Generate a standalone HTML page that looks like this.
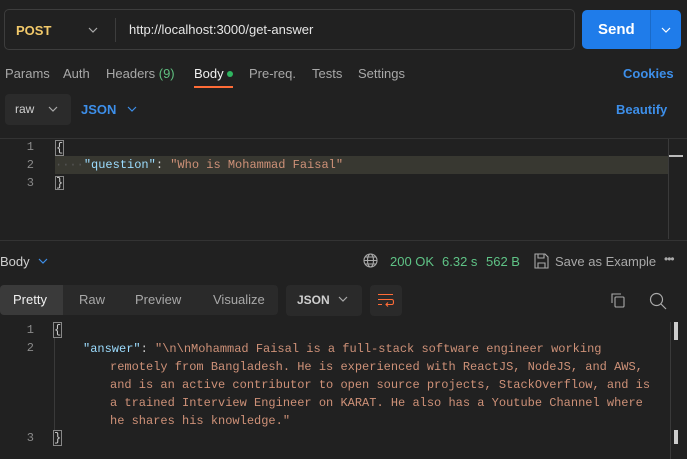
<!DOCTYPE html>
<html><head><meta charset="utf-8"><style>
*{margin:0;padding:0;box-sizing:border-box}
body{width:687px;height:459px;background:#212121;font-family:"Liberation Sans",sans-serif;font-size:13px;color:#cfcfcf;position:relative;overflow:hidden}
.a{position:absolute;white-space:nowrap}
.mono{font-family:"Liberation Mono",monospace;font-size:12px}
.ln{color:#8a8a8a;text-align:right;width:14px}
.k{color:#9cdcfe}.s{color:#ce9178}
</style></head><body>
<div class="a" style="left:4px;top:9px;width:571px;height:41px;border:1px solid #3d3d3d;border-radius:5px;background:#212121"></div>
<div class="a" style="left:16px;top:23px;color:#f2c96a;font-weight:bold;font-size:13px">POST</div>
<svg class="a" style="left:88px;top:26px" width="10" height="8"><path d="M1 2l4 4 4-4" stroke="#aaa" fill="none" stroke-width="1.2"/></svg>
<div class="a" style="left:115px;top:18px;width:1px;height:24px;background:#3d3d3d"></div>
<div class="a" style="left:129px;top:22px;color:#e6e6e6;font-size:13px">http://localhost:3000/get-answer</div>
<div class="a" style="left:582px;top:10px;width:99px;height:39px;background:#1f7cea;border-radius:5px"></div>
<div class="a" style="left:650px;top:10px;width:1px;height:39px;background:#1a6ac8"></div>
<div class="a" style="left:598px;top:21px;color:#fff;font-weight:bold;font-size:15px">Send</div>
<svg class="a" style="left:661px;top:26px" width="10" height="8"><path d="M1 2l4 4 4-4" stroke="#fff" fill="none" stroke-width="1.2"/></svg>

<div class="a" style="left:5px;top:66px;color:#a8a8a8">Params</div>
<div class="a" style="left:63px;top:66px;color:#a8a8a8">Auth</div>
<div class="a" style="left:106px;top:66px;color:#a8a8a8">Headers <span style="color:#5fbf7f">(9)</span></div>
<div class="a" style="left:194px;top:66px;color:#f0f0f0">Body</div>
<div class="a" style="left:227px;top:71px;width:6px;height:6px;border-radius:50%;background:#2fb660"></div>
<div class="a" style="left:194px;top:86px;width:39px;height:2px;background:#ff6c37"></div>
<div class="a" style="left:249px;top:66px;color:#a8a8a8">Pre-req.</div>
<div class="a" style="left:312px;top:66px;color:#a8a8a8">Tests</div>
<div class="a" style="left:358px;top:66px;color:#a8a8a8">Settings</div>
<div class="a" style="left:623px;top:66px;color:#3d8fea;font-weight:bold">Cookies</div>

<div class="a" style="left:5px;top:94px;width:66px;height:31px;background:#2b2b2b;border-radius:4px"></div>
<div class="a" style="left:15px;top:102px;color:#cfcfcf;font-size:12px">raw</div>
<svg class="a" style="left:48px;top:106px" width="10" height="8"><path d="M1 1l4 4 4-4" stroke="#aaa" fill="none" stroke-width="1.2"/></svg>
<div class="a" style="left:81px;top:102px;color:#3d8fea;font-weight:bold">JSON</div>
<svg class="a" style="left:127px;top:106px" width="10" height="8"><path d="M1 1l4 4 4-4" stroke="#3d8fea" fill="none" stroke-width="1.2"/></svg>
<div class="a" style="left:616px;top:102px;color:#3d8fea;font-weight:bold">Beautify</div>

<div class="a" style="left:0;top:138px;width:687px;height:1px;background:#333"></div>
<div class="a" style="left:55px;top:156px;width:613px;height:18px;background:#383831"></div>
<div class="a" style="left:668px;top:139px;width:1px;height:100px;background:#3a3a3a"></div>
<div class="a" style="left:669px;top:155px;width:14px;height:2px;background:#bbb"></div>
<div class="a mono ln" style="left:20px;top:140px">1</div>
<div class="a mono ln" style="left:20px;top:158px">2</div>
<div class="a mono ln" style="left:20px;top:176px">3</div>
<div class="a mono" style="left:55px;top:140px;border:1px solid #888;line-height:14px;height:16px">{</div>
<div class="a mono" style="left:55px;top:158px"><span style="color:#555">····</span><span class="k">"question"</span>: <span class="s">"Who is Mohammad Faisal"</span></div>
<div class="a mono" style="left:55px;top:176px;border:1px solid #888;line-height:12px;height:14px">}</div>
<div class="a" style="left:0;top:240px;width:687px;height:1px;background:#333"></div>

<div class="a" style="left:0;top:254px;color:#cfcfcf">Body</div>
<svg class="a" style="left:38px;top:258px" width="10" height="8"><path d="M1 1l4 4 4-4" stroke="#3d8fea" fill="none" stroke-width="1.2"/></svg>
<svg class="a" style="left:363px;top:253px" width="15" height="15" fill="none" stroke="#aaa" stroke-width="1.1"><circle cx="7.5" cy="7.5" r="6.5"/><ellipse cx="7.5" cy="7.5" rx="3" ry="6.5"/><path d="M1 7.5h13M2 4h11M2 11h11"/></svg>
<div class="a" style="left:390px;top:254px;color:#5fc386">200 OK</div>
<div class="a" style="left:442px;top:254px;color:#5fc386">6.32 s</div>
<div class="a" style="left:486px;top:254px;color:#5fc386">562 B</div>
<svg class="a" style="left:534px;top:253px" width="15" height="16" fill="none" stroke="#aaa" stroke-width="1.1"><path d="M1 1h10l3 3v11H1z"/><path d="M4 1v4h6V1M4 15v-5h7v5"/></svg>
<div class="a" style="left:555px;top:254px;color:#a8a8a8">Save as Example</div>
<div class="a" style="left:664px;top:252px;color:#aaa;font-size:12px;letter-spacing:-1px">•••</div>

<div class="a" style="left:0;top:285px;width:278px;height:30px;background:#2a2a2a;border-radius:4px"></div>
<div class="a" style="left:0;top:285px;width:63px;height:30px;background:#3a3a3a;border-radius:4px 0 0 4px"></div>
<div class="a" style="left:13px;top:292px;color:#f0f0f0">Pretty</div>
<div class="a" style="left:79px;top:292px;color:#a8a8a8">Raw</div>
<div class="a" style="left:135px;top:292px;color:#a8a8a8">Preview</div>
<div class="a" style="left:213px;top:292px;color:#a8a8a8">Visualize</div>
<div class="a" style="left:286px;top:285px;width:76px;height:31px;background:#2a2a2a;border-radius:4px"></div>
<div class="a" style="left:297px;top:293px;color:#cfcfcf;font-size:12px;font-weight:bold">JSON</div>
<svg class="a" style="left:338px;top:296px" width="10" height="8"><path d="M1 1l4 4 4-4" stroke="#aaa" fill="none" stroke-width="1.2"/></svg>
<div class="a" style="left:370px;top:285px;width:32px;height:31px;background:#2a2a2a;border-radius:4px"></div>
<svg class="a" style="left:377px;top:293px" width="18" height="15" fill="none" stroke="#ff6c37" stroke-width="1.1"><path d="M1 1.5h15M1 6.5h14c2 0 2 5 0 5H9M11 9.5l-2 2 2 2M1 11.5h4"/></svg>
<svg class="a" style="left:610px;top:292px" width="16" height="17" fill="none" stroke="#aaa" stroke-width="1.1"><rect x="5" y="5" width="9" height="10" rx="1"/><path d="M2 11V2h9"/></svg>
<svg class="a" style="left:649px;top:292px" width="18" height="18" fill="none" stroke="#aaa" stroke-width="1.2"><circle cx="7.5" cy="7.5" r="6"/><path d="M12 12l5 5"/></svg>

<div class="a" style="left:670px;top:322px;width:1px;height:137px;background:#3a3a3a"></div>
<div class="a" style="left:674px;top:322px;width:4px;height:18px;background:#ccc"></div>
<div class="a" style="left:674px;top:430px;width:4px;height:14px;background:#ccc"></div>
<div class="a" style="left:54px;top:338px;width:1px;height:92px;background:#3a3a3a"></div>
<div class="a mono ln" style="left:20px;top:323px">1</div>
<div class="a mono ln" style="left:20px;top:341px">2</div>
<div class="a mono ln" style="left:20px;top:431px">3</div>
<div class="a mono" style="left:53px;top:322px;border:1px solid #888;line-height:14px;height:16px">{</div>
<div class="a mono" style="left:83px;top:340px;line-height:18px"><span class="k">"answer"</span>: <span class="s">"\n\nMohammad Faisal is a full-stack software engineer working</span></div>
<div class="a mono s" style="left:110px;top:358px;line-height:18px">remotely from Bangladesh. He is experienced with ReactJS, NodeJS, and AWS,<br>and is an active contributor to open source projects, StackOverflow, and is<br>a trained Interview Engineer on KARAT. He also has a Youtube Channel where<br>he shares his knowledge."</div>
<div class="a mono" style="left:53px;top:430px;border:1px solid #888;line-height:14px;height:16px">}</div>
</body></html>
